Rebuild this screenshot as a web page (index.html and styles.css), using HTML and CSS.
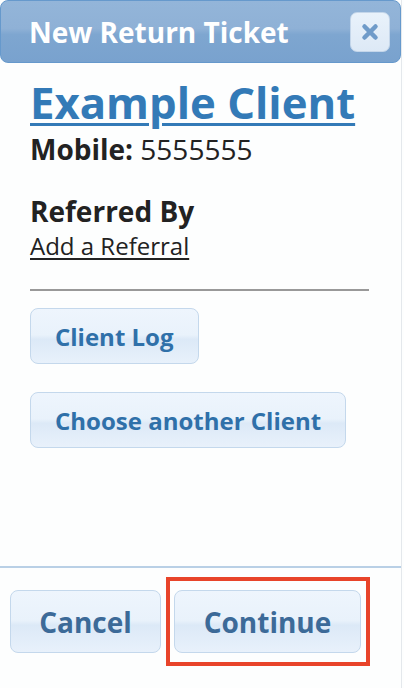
FILE: index.html
```html
<!DOCTYPE html>
<html lang="en">
<head>
<meta charset="utf-8">
<title>New Return Ticket</title>
<link rel="stylesheet" href="styles.css">
</head>
<body>
<div class="dialog">
  <header class="titlebar">
    <span class="title">New Return Ticket</span>
    <button class="close" type="button" aria-label="Close">
      <svg width="18" height="18" viewBox="0 0 18 18" aria-hidden="true">
        <path d="M3.5 3.5 L14.5 14.5 M14.5 3.5 L3.5 14.5" stroke="#6f9bc9" stroke-width="4.5" stroke-linecap="round"/>
      </svg>
    </button>
  </header>
  <main class="body">
    <a class="client" href="#">Example Client</a>
    <div class="phone"><b>Mobile:</b> 5555555</div>
    <h3 class="label">Referred By</h3>
    <a class="referral" href="#">Add a Referral</a>
    <hr class="rule">
    <div class="actions">
      <button class="btn" type="button">Client Log</button>
      <button class="btn" type="button">Choose another Client</button>
    </div>
  </main>
  <footer class="footer">
    <button class="btn btn-lg cancel" type="button">Cancel</button>
    <div class="focus-wrap">
      <button class="btn btn-lg continue" type="button">Continue</button>
    </div>
  </footer>
</div>
</body>
</html>
```
FILE: styles.css
```css
*, *::before, *::after { box-sizing: border-box; }

html, body {
  margin: 0;
  padding: 0;
  background: #fdfefe;
}

body {
  font-family: "Open Sans", "Noto Sans", sans-serif;
  color: #222;
}

.dialog {
  width: 402px;
  height: 688px;
  display: flex;
  flex-direction: column;
  border-right: 1px solid #e4e8ec;
}

.titlebar {
  flex: none;
  height: 63px;
  display: flex;
  align-items: center;
  justify-content: space-between;
  padding: 0 10px 0 28px;
  border: 1px solid #6699cc;
  border-radius: 8px;
  background: linear-gradient(#93b5d9 0%, #8fb1d6 45%, #7ea6d0 55%, #79a2ce 100%);
}

.title {
  color: #fff;
  font-weight: 700;
  font-size: 28px;
  line-height: 36px;
}

.close {
  width: 40px;
  height: 40px;
  border: 1px solid #c4d6ea;
  border-radius: 7px;
  background: linear-gradient(#e9f2fb, #dde9f6);
  display: flex;
  align-items: center;
  justify-content: center;
  padding: 0;
}

.body {
  flex: 1;
  padding: 15px 0 0 30px;
  display: flex;
  flex-direction: column;
  align-items: flex-start;
}

.client {
  font-size: 43.7px;
  font-weight: 700;
  color: #337ab7;
  line-height: 48px;
  text-decoration-thickness: 3px;
  text-underline-offset: 4px;
}

.phone {
  font-size: 28px;
  line-height: 36px;
  margin-top: 5px;
}

.label {
  margin: 26px 0 0;
  font-size: 28px;
  font-weight: 700;
  line-height: 36px;
}

.referral {
  color: #222;
  font-size: 24px;
  line-height: 32px;
  margin-top: 1px;
  text-decoration-thickness: 2px;
  text-underline-offset: 3px;
}

.rule {
  width: 339px;
  margin: 27px 0 0;
  border: 0;
  border-top: 2px solid #999;
  height: 0;
}

.actions {
  margin-top: 17px;
  display: flex;
  flex-direction: column;
  align-items: flex-start;
  gap: 28px;
}

.btn {
  font-family: inherit;
  font-weight: 700;
  font-size: 24px;
  color: #2f70a9;
  height: 56px;
  padding: 0 24px;
  border: 1px solid #c4d8ec;
  border-radius: 8px;
  background: linear-gradient(#eef5fd 0%, #e9f2fb 48%, #dce9f7 56%, #e8f1fb 100%);
}

.footer {
  flex: none;
  height: 122px;
  border-top: 2px solid #b9d0e6;
  display: flex;
  align-items: flex-start;
  gap: 13px;
  padding: 22px 0 0 10px;
}

.btn-lg {
  height: 63px;
  font-size: 28px;
  color: #3c6a98;
  padding: 0;
}

.cancel { width: 151px; }

.focus-wrap {
  position: relative;
  display: flex;
}

.continue { width: 187px; }

.focus-wrap::after {
  content: "";
  position: absolute;
  left: -8px;
  top: -13px;
  width: 204px;
  height: 89px;
  border: 4px solid #e8442a;
  pointer-events: none;
}
```
